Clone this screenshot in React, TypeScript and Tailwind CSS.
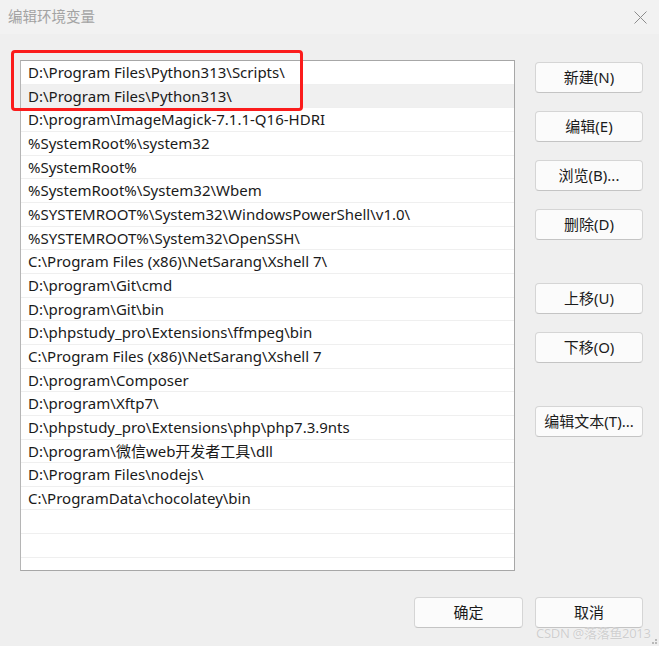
import React from "react";

const paths = [
  "D:\\Program Files\\Python313\\Scripts\\",
  "D:\\Program Files\\Python313\\",
  "D:\\program\\ImageMagick-7.1.1-Q16-HDRI",
  "%SystemRoot%\\system32",
  "%SystemRoot%",
  "%SystemRoot%\\System32\\Wbem",
  "%SYSTEMROOT%\\System32\\WindowsPowerShell\\v1.0\\",
  "%SYSTEMROOT%\\System32\\OpenSSH\\",
  "C:\\Program Files (x86)\\NetSarang\\Xshell 7\\",
  "D:\\program\\Git\\cmd",
  "D:\\program\\Git\\bin",
  "D:\\phpstudy_pro\\Extensions\\ffmpeg\\bin",
  "C:\\Program Files (x86)\\NetSarang\\Xshell 7",
  "D:\\program\\Composer",
  "D:\\program\\Xftp7\\",
  "D:\\phpstudy_pro\\Extensions\\php\\php7.3.9nts",
  "D:\\program\\微信web开发者工具\\dll",
  "D:\\Program Files\\nodejs\\",
  "C:\\ProgramData\\chocolatey\\bin",
];

const font = { fontFamily: '"Noto Sans", "Noto Sans CJK SC", sans-serif' };

function DlgButton({ label, className = "" }: { label: string; className?: string }) {
  return (
    <button
      className={`h-[31px] w-[108px] rounded-[4px] border border-[#d5d5d5] border-b-[#c4c4c4] bg-[#fbfbfb] text-[15px] text-[#1b1b1b] ${className}`}
    >
      {label}
    </button>
  );
}

export default function App() {
  return (
    <div className="relative h-[646px] w-[659px] overflow-hidden bg-[#efefef]" style={font}>
      {/* Title bar */}
      <div className="flex h-[34px] items-center justify-between bg-[#f2f2f2] pl-[8px] pr-[12px]">
        <span className="text-[14.5px] text-[#a3a3a3]">编辑环境变量</span>
        <svg className="h-[13px] w-[13px] text-[#8c8c8c]" viewBox="0 0 13 13" fill="none" stroke="currentColor" strokeWidth={1}>
          <path d="M0.5 0.5l12 12M12.5 0.5l-12 12" />
        </svg>
      </div>

      {/* Body */}
      <div className="flex gap-[20px] pl-[20px] pt-[26px]">
        {/* Path list */}
        <div className="h-[511px] w-[495px] overflow-hidden border border-[#a7a7a7] border-l-[#b5b5b5] bg-white">
          {paths.map((p, i) => (
            <div
              key={i}
              className={`flex h-[23.67px] items-center border-b border-[#efefef] pl-[7px] text-[15px] text-[#1a1a1a] ${
                i === 1 ? "bg-[#f0f0f0]" : ""
              }`}
            >
              {p}
            </div>
          ))}
          <div className="h-[23.67px] border-b border-[#efefef]" />
          <div className="h-[23.67px] border-b border-[#efefef]" />
          <div className="h-[23.67px] border-b border-[#efefef]" />
        </div>

        {/* Side buttons */}
        <div className="flex flex-col pt-[2px]">
          <DlgButton label="新建(N)" />
          <DlgButton label="编辑(E)" className="mt-[18px]" />
          <DlgButton label="浏览(B)..." className="mt-[18px]" />
          <DlgButton label="删除(D)" className="mt-[18px]" />
          <DlgButton label="上移(U)" className="mt-[43px]" />
          <DlgButton label="下移(O)" className="mt-[18px]" />
          <DlgButton label="编辑文本(T)..." className="mt-[43px]" />
        </div>
      </div>

      {/* Footer */}
      <div className="flex justify-end gap-[12px] pr-[16px] pt-[26px]">
        <DlgButton label="确定" className="w-[109px]" />
        <DlgButton label="取消" />
      </div>

      {/* Red annotation box */}
      <div className="absolute left-[11px] top-[50px] h-[61px] w-[292px] rounded-[4px] border-[3px] border-[#fb1c1c]" />

      {/* Watermark */}
      <span className="absolute left-[536px] top-[624px] text-[13px] tracking-[-0.3px] text-[#cfcfcf] [text-shadow:0_0_1px_#ffffff]">
        CSDN @落落鱼2013
      </span>
      <div className="absolute bottom-[2px] right-[2px] grid grid-cols-2 gap-[1px]">
        <span className="h-[2px] w-[2px]" />
        <span className="h-[2px] w-[2px] bg-[#b9b9b9]" />
        <span className="h-[2px] w-[2px] bg-[#b9b9b9]" />
        <span className="h-[2px] w-[2px] bg-[#b9b9b9]" />
      </div>
    </div>
  );
}
